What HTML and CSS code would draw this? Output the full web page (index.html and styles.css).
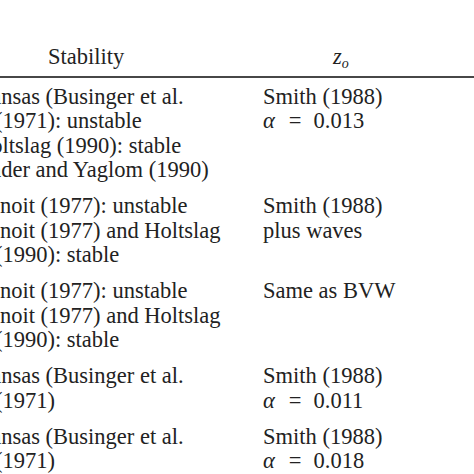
FILE: index.html
```html
<!DOCTYPE html>
<html>
<head>
<meta charset="utf-8">
<link rel="stylesheet" href="styles.css">
</head>
<body>
<div class="table">
  <div class="head">
    <div class="hcell h-stab">Stability</div>
    <div class="hcell h-z"><i>z</i><sub>o</sub></div>
    <div class="hcell"></div>
  </div>
  <div class="row">
    <div class="cell stab">
      <div class="entry">Kansas (Businger et al.<br>(1971): unstable</div>
      <div class="entry">Holtslag (1990): stable</div>
      <div class="entry">Kader and Yaglom (1990)</div>
    </div>
    <div class="cell z">Smith (1988)<br><i>α</i><span class="eq">=</span>0.013</div>
  </div>
  <div class="row">
    <div class="cell stab">
      <div class="entry">Benoit (1977): unstable</div>
      <div class="entry">Benoit (1977) and Holtslag<br>(1990): stable</div>
    </div>
    <div class="cell z">Smith (1988)<br>plus waves</div>
  </div>
  <div class="row">
    <div class="cell stab">
      <div class="entry">Benoit (1977): unstable</div>
      <div class="entry">Benoit (1977) and Holtslag<br>(1990): stable</div>
    </div>
    <div class="cell z">Same as BVW</div>
  </div>
  <div class="row">
    <div class="cell stab">
      <div class="entry">Kansas (Businger et al.<br>(1971)</div>
    </div>
    <div class="cell z">Smith (1988)<br><i>α</i><span class="eq">=</span>0.011</div>
  </div>
  <div class="row">
    <div class="cell stab">
      <div class="entry">Kansas (Businger et al.<br>(1971)</div>
    </div>
    <div class="cell z">Smith (1988)<br><i>α</i><span class="eq">=</span>0.018</div>
  </div>
</div>
</body>
</html>
```
FILE: styles.css
```css
html, body {
  margin: 0;
  padding: 0;
  background: #ffffff;
  overflow: hidden;
}
body {
  font-family: "Liberation Serif", "Times New Roman", serif;
  font-size: 22.5px;
  line-height: 24.2px;
  color: #222222;
}
.table {
  margin-left: -25px;
  padding-top: 45px;
}
.head {
  display: grid;
  grid-template-columns: 288px 154px 1fr;
  padding-bottom: 7px;
  border-bottom: 2px solid #474747;
}
.h-stab {
  padding-left: 73px;
}
.h-z {
  padding-left: 70px;
}
.h-z i {
  font-style: italic;
}
.h-z sub {
  font-style: italic;
  font-size: 14px;
  vertical-align: -4px;
  line-height: 0;
  margin-left: 0;
}
.row {
  display: grid;
  grid-template-columns: 288px 1fr;
  padding-bottom: 12.4px;
}
.head + .row {
  padding-top: 7px;
}
.entry {
  padding-left: 20px;
  text-indent: -20px;
  white-space: nowrap;
}
.cell.z {
  white-space: nowrap;
}
.eq {
  margin: 0 12px 0 14px;
}
```
